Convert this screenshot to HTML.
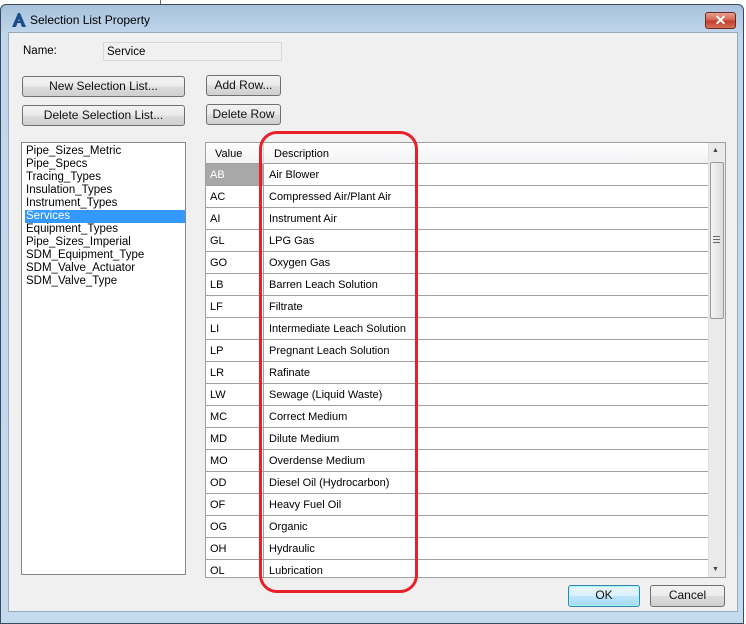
<!DOCTYPE html>
<html><head><style>
*{margin:0;padding:0;box-sizing:border-box}
body{width:746px;height:624px;overflow:hidden;background:#fff;font-family:"Liberation Sans",sans-serif;font-size:11px;color:#000;position:relative}
.a{position:absolute}
.btn{position:absolute;border:1px solid #707070;border-radius:3px;background:linear-gradient(#f2f2f2 0%,#ebebeb 50%,#dddddd 51%,#cfcfcf 100%);text-align:center;font-size:12px;line-height:19px;color:#111}
.row{position:absolute;left:0;width:502px;height:22px;border-bottom:1px solid #a0a0a0;background:#fff}
.row span{position:absolute;top:5px;font-size:11px}
.row .v{left:4px}.row .d{left:63px}
.row .sep{position:absolute;left:57px;top:0;width:1px;height:22px;background:#a0a0a0}
.li{position:absolute;left:3px;font-size:11.5px;line-height:13px;height:13px;width:160px;padding-left:1px}
</style></head><body>
<div class="a" style="left:0;top:0;width:746px;height:5px;background:#fff"></div>
<div class="a" style="left:160px;top:0;width:1px;height:5px;background:#666"></div>
<div class="a" style="left:0;top:4px;width:744px;height:620px;border:1px solid #3a4a5a;border-radius:6px 6px 0 0;background:linear-gradient(#a9c3dd,#c0d6ec 30px,#c4daef)"></div>
<div class="a" style="left:8px;top:32px;width:730px;height:580px;background:#f0f0f0;border:1px solid #9ab"></div>
<!-- title icon -->
<svg class="a" style="left:11px;top:12px" width="16" height="16" viewBox="0 0 16 16"><path d="M1 15 L7 1 L9 1 L15 15 L11 15 L8 7 L5 15 Z" fill="#1b4f8a"/><path d="M5 11 L11 11 L10.3 9 L5.8 9Z" fill="#1b4f8a"/></svg>
<div class="a" style="left:30px;top:13px;font-size:12px;color:#000">Selection List Property</div>
<!-- close -->
<div class="a" style="left:705px;top:12px;width:31px;height:17px;border:1px solid #6a2a20;border-radius:3px;background:linear-gradient(#e8a090,#d06050 50%,#c03a28 51%,#d8705a)"></div>
<div class="a" style="left:705px;top:11px;width:31px;height:17px;text-align:center;color:#fff;font-weight:bold;font-size:14px;line-height:18px">✕</div>
<!-- name -->
<div class="a" style="left:23px;top:45px;font-size:11.5px">Name:</div>
<div class="a" style="left:103px;top:42px;width:179px;height:19px;border:1px solid #d8d8d8;background:#f0f0f0;font-size:11.5px;padding:3px 0 0 3px">Service</div>
<div class="btn" style="left:22px;top:76px;width:163px;height:21px">New Selection List...</div>
<div class="btn" style="left:22px;top:105px;width:163px;height:21px">Delete Selection List...</div>
<div class="btn" style="left:206px;top:75px;width:75px;height:21px">Add Row...</div>
<div class="btn" style="left:206px;top:104px;width:75px;height:21px">Delete Row</div>
<!-- list -->
<div class="a" style="left:21px;top:142px;width:165px;height:433px;border:1px solid #828790;background:#fff">
<div class="li" style="top:2px">Pipe_Sizes_Metric</div>
<div class="li" style="top:15px">Pipe_Specs</div>
<div class="li" style="top:28px">Tracing_Types</div>
<div class="li" style="top:41px">Insulation_Types</div>
<div class="li" style="top:54px">Instrument_Types</div>
<div class="li" style="top:67px;background:#3399ff;color:#fff">Services</div>
<div class="li" style="top:80px">Equipment_Types</div>
<div class="li" style="top:93px">Pipe_Sizes_Imperial</div>
<div class="li" style="top:106px">SDM_Equipment_Type</div>
<div class="li" style="top:119px">SDM_Valve_Actuator</div>
<div class="li" style="top:132px">SDM_Valve_Type</div>
</div>
<!-- grid -->
<div class="a" style="left:205px;top:142px;width:521px;height:436px;border:1px solid #a0a0a0;background:#f0f0f0;overflow:hidden">
<div class="a" style="left:0;top:0;width:502px;height:21px;background:linear-gradient(#fff,#f1f2f4);border-bottom:1px solid #a0a0a0"></div>
<div class="a" style="left:57px;top:1px;width:1px;height:20px;background:#d5d5d5"></div>
<div class="a" style="left:9px;top:5px;font-size:11px">Value</div>
<div class="a" style="left:68px;top:5px;font-size:11px">Description</div>
<div class="a" style="left:0;top:21px;width:502px;height:420px">
<div class="row" style="top:0"><div class="a" style="left:0;top:0;width:57px;height:21px;background:#a8a8a8"></div><span class="v" style="color:#fff">AB</span><div class="sep"></div><span class="d">Air Blower</span></div>
<div class="row" style="top:22px"><span class="v">AC</span><div class="sep"></div><span class="d">Compressed Air/Plant Air</span></div>
<div class="row" style="top:44px"><span class="v">AI</span><div class="sep"></div><span class="d">Instrument Air</span></div>
<div class="row" style="top:66px"><span class="v">GL</span><div class="sep"></div><span class="d">LPG Gas</span></div>
<div class="row" style="top:88px"><span class="v">GO</span><div class="sep"></div><span class="d">Oxygen Gas</span></div>
<div class="row" style="top:110px"><span class="v">LB</span><div class="sep"></div><span class="d">Barren Leach Solution</span></div>
<div class="row" style="top:132px"><span class="v">LF</span><div class="sep"></div><span class="d">Filtrate</span></div>
<div class="row" style="top:154px"><span class="v">LI</span><div class="sep"></div><span class="d">Intermediate Leach Solution</span></div>
<div class="row" style="top:176px"><span class="v">LP</span><div class="sep"></div><span class="d">Pregnant Leach Solution</span></div>
<div class="row" style="top:198px"><span class="v">LR</span><div class="sep"></div><span class="d">Rafinate</span></div>
<div class="row" style="top:220px"><span class="v">LW</span><div class="sep"></div><span class="d">Sewage (Liquid Waste)</span></div>
<div class="row" style="top:242px"><span class="v">MC</span><div class="sep"></div><span class="d">Correct Medium</span></div>
<div class="row" style="top:264px"><span class="v">MD</span><div class="sep"></div><span class="d">Dilute Medium</span></div>
<div class="row" style="top:286px"><span class="v">MO</span><div class="sep"></div><span class="d">Overdense Medium</span></div>
<div class="row" style="top:308px"><span class="v">OD</span><div class="sep"></div><span class="d">Diesel Oil (Hydrocarbon)</span></div>
<div class="row" style="top:330px"><span class="v">OF</span><div class="sep"></div><span class="d">Heavy Fuel Oil</span></div>
<div class="row" style="top:352px"><span class="v">OG</span><div class="sep"></div><span class="d">Organic</span></div>
<div class="row" style="top:374px"><span class="v">OH</span><div class="sep"></div><span class="d">Hydraulic</span></div>
<div class="row" style="top:396px"><span class="v">OL</span><div class="sep"></div><span class="d">Lubrication</span></div>
</div>
<!-- scrollbar -->
<div class="a" style="left:502px;top:0;width:17px;height:434px;background:#eaeaea;border-left:1px solid #e0e0e0"></div>
<div class="a" style="left:506px;top:4px;font-size:7px;color:#444">▲</div>
<div class="a" style="left:506px;top:423px;font-size:7px;color:#444">▼</div>
<div class="a" style="left:504px;top:19px;width:14px;height:157px;border:1px solid #999;border-radius:2px;background:linear-gradient(90deg,#f4f4f4,#dcdcdc)"></div>
<div class="a" style="left:507px;top:93px;width:7px;height:7px;border-top:1px solid #666;border-bottom:1px solid #666"><div style="margin-top:2px;height:1px;background:#666"></div></div>
</div>
<!-- red outline -->
<div class="a" style="left:259px;top:131px;width:159px;height:462px;border:3px solid #e8202a;border-radius:18px"></div>
<!-- OK / Cancel -->
<div class="btn" style="left:568px;top:585px;width:72px;height:22px;border-color:#3c7fb1;background:linear-gradient(#eaf6fd,#d9f0fc 50%,#bee6fd 51%,#a7d9f5);box-shadow:inset 0 0 0 1px #9fe">OK</div>
<div class="btn" style="left:650px;top:585px;width:75px;height:22px">Cancel</div>
</body></html>
